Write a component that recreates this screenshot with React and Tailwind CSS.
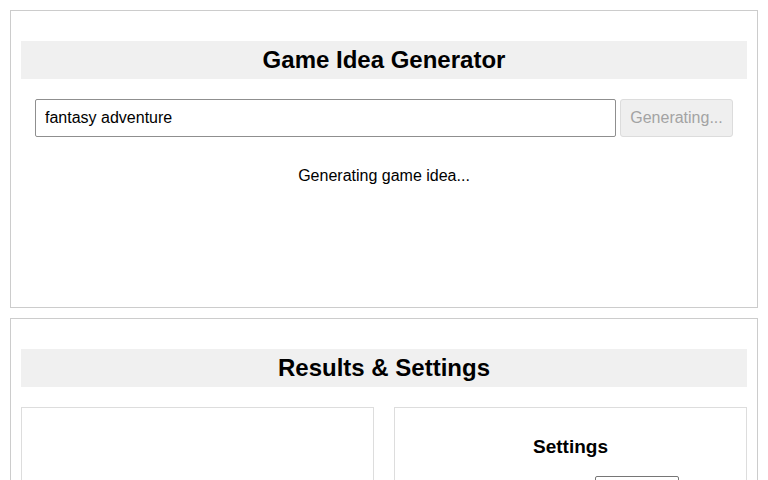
import React from "react";

export default function App() {
  return (
    <div className="p-[10px] flex flex-col gap-[10px] bg-white text-black" style={{ fontFamily: '"Liberation Sans", Arial, sans-serif' }}>
      <div className="border border-[#cccccc] p-[10px] h-[298px]">
        <h2 className="mt-[20px] mb-[20px] bg-[#f0f0f0] h-[38px] flex items-center justify-center text-[24px] font-bold leading-none">
          Game Idea Generator
        </h2>
        <div className="flex justify-center gap-[4px]">
          <input
            readOnly
            value="fantasy adventure"
            className="w-[581px] h-[38px] pl-[9px] pr-[10px] text-[16px] border border-[#8f8f8f] rounded-[2px] outline-none"
            style={{ fontFamily: '"Liberation Sans", Arial, sans-serif' }}
          />
          <button
            disabled
            className="w-[113px] h-[38px] text-[16px] text-[#a3a3a3] bg-[#efefef] border border-[#dcdcdc] rounded-[3px]"
            style={{ fontFamily: '"Liberation Sans", Arial, sans-serif' }}
          >
            Generating...
          </button>
        </div>
        <p className="mt-[30px] text-center text-[16px] leading-[18px]">Generating game idea...</p>
      </div>
      <div className="border border-[#cccccc] p-[10px] h-[300px]">
        <h2 className="mt-[20px] mb-[20px] bg-[#f0f0f0] h-[38px] flex items-center justify-center text-[24px] font-bold leading-none">
          Results &amp; Settings
        </h2>
        <div className="grid grid-cols-2 gap-[20px]">
          <div className="border border-[#dddddd] h-[200px]"></div>
          <div className="border border-[#dddddd] h-[200px] p-[10px]">
            <h3 className="mt-[18px] text-center text-[19px] font-bold leading-[22px]">Settings</h3>
            <div className="mt-[18px] flex items-center">
              <label className="w-[190px] shrink-0 text-right pr-[10px] text-[16px] opacity-0">Theme</label>
              <input readOnly value="" className="w-[84px] h-[30px] border border-[#767676] rounded-[2px]" />
            </div>
          </div>
        </div>
      </div>
    </div>
  );
}
